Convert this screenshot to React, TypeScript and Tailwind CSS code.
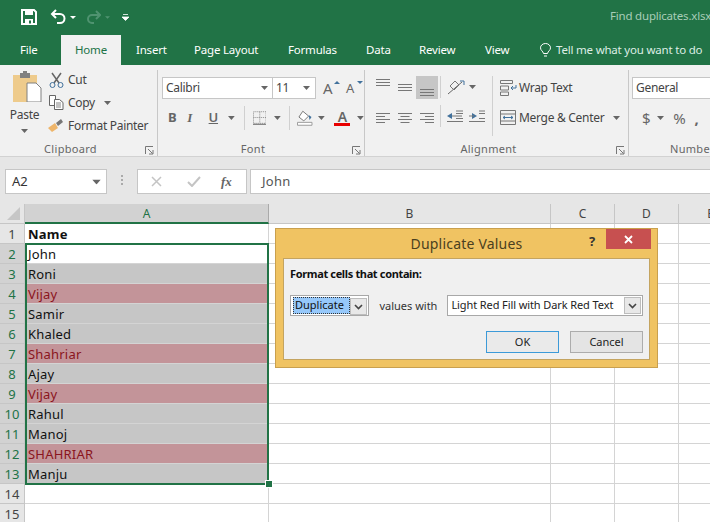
import React from "react";

const Caret = ({ className = "" }: { className?: string }) => (
  <svg width="7" height="4" viewBox="0 0 7 4" className={className}><path d="M0 0h7L3.5 4z" fill="#666" /></svg>
);
const Lines = ({ widths, align = "left", color = "#777" }: { widths: number[]; align?: string; color?: string }) => (
  <svg width="16" height="14" viewBox="0 0 16 14">
    {widths.map((w, i) => {
      const x = align === "left" ? 1 : align === "right" ? 15 - w : 8 - w / 2;
      return <path key={i} d={`M${x} ${2.5 + i * 3}h${w}`} stroke={color} strokeWidth="1" />;
    })}
  </svg>
);
const VAlign = ({ top }: { top: number }) => (
  <svg width="16" height="22" viewBox="0 0 16 22">
    {[0, 3, 6].map((d) => <path key={d} d={`M1 ${top + d + 0.5}h14`} stroke="#777" />)}
  </svg>
);
const Sep = ({ h = "h-[24px]" }: { h?: string }) => <div className={`w-px ${h} bg-[#d0d0d0]`} />;

const Group = ({ w, label, launcher = true, children }: { w: string; label: string; launcher?: boolean; children: React.ReactNode }) => (
  <div className={`${w} shrink-0 h-[86px] border-r border-[#c8c8c8] relative flex flex-col`}>
    <div className="h-[72px] shrink-0">{children}</div>
    <div className="text-[11px] leading-[14px] text-[#666] text-center tracking-[0.3px] pr-[16px]">{label}</div>
    {launcher && (
      <svg width="9" height="9" viewBox="0 0 9 9" className="absolute right-[3px] bottom-[1px]">
        <path d="M.5 8V.5H8M3 3l4.5 4.5M4 8h4V4" stroke="#777" fill="none" />
      </svg>
    )}
  </div>
);

const rows: [string, number][] = [
  ["John", 0], ["Roni", 1], ["Vijay", 2], ["Samir", 1], ["Khaled", 1], ["Shahriar", 2], ["Ajay", 1], ["Vijay", 2], ["Rahul", 1], ["Manoj", 1], ["SHAHRIAR", 2], ["Manju", 1],
];

const Row = ({ n, text, kind, bold }: { n: number; text?: string; kind?: number; bold?: boolean }) => {
  const sel = n >= 2 && n <= 13;
  return (
    <div className="flex h-[20px]">
      <div className={`w-[25px] shrink-0 border-r border-b border-[#c6c6c6] text-[13px] leading-[21px] text-center ${sel ? "bg-[#d2d2d2] text-[#217346]" : "bg-[#e6e6e6] text-[#444]"}`}>{n}</div>
      <div className={`w-[244px] shrink-0 border-r border-b border-[#d4d4d4] pl-[3px] text-[13px] leading-[21px] tracking-[0.2px] ${kind === 1 ? "bg-[#c6c6c6] text-[#111]" : kind === 2 ? "bg-[#c39499] text-[#8a1420]" : "bg-white text-[#111]"} ${bold ? "font-bold" : ""}`}>{text}</div>
      <div className="w-[282px] shrink-0 border-r border-b border-[#d4d4d4] bg-white" />
      <div className="w-[64px] shrink-0 border-r border-b border-[#d4d4d4] bg-white" />
      <div className="w-[64px] shrink-0 border-r border-b border-[#d4d4d4] bg-white" />
      <div className="w-[64px] shrink-0 border-r border-b border-[#d4d4d4] bg-white" />
    </div>
  );
};

const ComboBtn = () => (
  <div className="w-[17px] h-[17px] mt-px mr-px bg-[#e8e8e8] border border-[#bdbdbd] flex items-center justify-center">
    <svg width="9" height="6" viewBox="0 0 9 6"><path d="M1 1l3.5 3.5L8 1" stroke="#444" strokeWidth="1.6" fill="none" /></svg>
  </div>
);

export default function App() {
  return (
    <div className="w-[710px] h-[522px] overflow-hidden relative bg-white text-[12px] font-['Noto_Sans','Open_Sans',sans-serif] text-[#444]">
      {/* Title bar */}
      <div className="h-[35px] bg-[#217346] flex items-center relative">
        <svg width="16" height="16" viewBox="0 0 16 16" className="ml-[21px] mb-[2px]">
          <path d="M1 1h12l2 2v12H1z" fill="none" stroke="#fff" strokeWidth="2" />
          <path d="M4 1h8v5H4zM4 10h8v5H4z" fill="#fff" />
          <path d="M8 11.5h2v3H8z" fill="#217346" />
        </svg>
        <svg width="17" height="15" viewBox="0 0 17 15" className="ml-[13px] mb-[2px]">
          <path d="M6 1L2 5l4 4M2 5h8a4.5 4.5 0 0 1 0 9H7" fill="none" stroke="#fff" strokeWidth="2" />
        </svg>
        <svg width="6" height="3" viewBox="0 0 6 3" className="ml-[3px]"><path d="M0 0h6L3 3z" fill="#fff" /></svg>
        <svg width="15" height="14" viewBox="0 0 15 14" className="ml-[10px] mb-[1px]">
          <path d="M10 1l4 4-4 4M14 5H6a4 4 0 0 0 0 8h2" fill="none" stroke="#4f9370" strokeWidth="2" />
        </svg>
        <svg width="5" height="3" viewBox="0 0 6 3" className="ml-[4px]"><path d="M0 0h6L3 3z" fill="#4f9370" /></svg>
        <svg width="7" height="7" viewBox="0 0 7 7" className="ml-[12px]"><path d="M1 .5h5M0 3h7L3.5 6.5z" stroke="#fff" fill="#fff" strokeWidth=".8" /></svg>
        <div className="absolute left-[610px] top-[8px] text-[11.5px] leading-[16px] tracking-[-0.2px] text-[#a8cdb8] whitespace-nowrap">Find duplicates.xlsx</div>
      </div>
      {/* Tabs */}
      <div className="h-[30px] bg-[#217346] flex text-[11.5px] text-white leading-[30px] whitespace-nowrap tracking-[-0.2px]">
        <div className="ml-[20px] w-[41px] shrink-0">File</div>
        <div className="w-[60px] shrink-0 bg-[#f1f1f1] text-[#217346] text-center">Home</div>
        <div className="ml-[15px] w-[58px] shrink-0">Insert</div>
        <div className="w-[94px] shrink-0">Page Layout</div>
        <div className="w-[78px] shrink-0">Formulas</div>
        <div className="w-[53px] shrink-0">Data</div>
        <div className="w-[66px] shrink-0">Review</div>
        <div className="w-[54px] shrink-0">View</div>
        <div className="flex items-center shrink-0 text-[#ddeee5]">
          <svg width="13" height="15" viewBox="0 0 13 15" className="mr-[4px]">
            <path d="M4.5 10.5C4 8 1.500 7.500 1.500 4.800a5 4.300 0 0 1 10 0c0 2.700-2.500 3.200-3 5.700zM5 13h3" fill="none" stroke="#fff" />
          </svg>
          Tell me what you want to do
        </div>
      </div>
      {/* Ribbon */}
      <div className="h-[92px] bg-[#f1f1f1] border-b border-[#d2d2d2] flex pt-[5px] text-[12px] tracking-[-0.3px] whitespace-nowrap">
        <Group w="w-[158px]" label="Clipboard">
          <div className="flex">
            <div className="w-[49px] flex flex-col items-center pt-[1px]">
              <svg width="30" height="31" viewBox="0 0 30 31" className="ml-[5px]">
                <path d="M1 4h24v27H1z" fill="#eecb8c" />
                <path d="M8 2h10v5H8z" fill="#808080" />
                <path d="M11 0h4v3h-4z" fill="#808080" />
                <path d="M15 12h9l5 5v14H15z" fill="#fff" stroke="#808080" />
              </svg>
              <div className="leading-[16px] mt-[5px]">Paste</div>
              <Caret className="mt-[6px]" />
            </div>
            <div className="flex flex-col -mt-[2px]">
              <div className="h-[23px] flex items-center">
                <svg width="15" height="16" viewBox="0 0 15 16" className="mr-[4px]"><path d="M3 1l7 10M12 1L5 11" stroke="#666" strokeWidth="1.500" /><circle cx="3.500" cy="13" r="2.500" fill="none" stroke="#41719c" /><circle cx="11.500" cy="13" r="2.500" fill="none" stroke="#41719c" /></svg>
                Cut
              </div>
              <div className="h-[23px] flex items-center">
                <svg width="15" height="15" viewBox="0 0 15 15" className="mr-[4px]"><path d="M.5.500h6v10h-6z" fill="#fff" stroke="#666" /><path d="M5.500 4.500h5l3.500 3v7H5.500z" fill="#fff" stroke="#666" /><path d="M7 8h5M7 10h5M7 12h5" stroke="#888" /></svg>
                Copy
                <Caret className="ml-[9px]" />
              </div>
              <div className="h-[23px] flex items-center -ml-px">
                <svg width="16" height="14" viewBox="0 0 16 14" className="mr-[4px]"><path d="M0 9l7-5 3 5-6 4z" fill="#eeb56a" /><path d="M8 4l5-4 2 3-5 4z" fill="#777" /></svg>
                Format Painter
              </div>
            </div>
          </div>
        </Group>
        <Group w="w-[207px]" label="Font">
          <div className="ml-[4px] mt-[7px] flex items-center h-[22px]">
            <div className="w-[111px] h-[22px] bg-white border border-[#c6c6c6] pl-[3px] flex items-center justify-between pr-[4px]">Calibri<Caret /></div>
            <div className="w-[43px] h-[22px] bg-white border border-l-0 border-[#c6c6c6] pl-[3px] flex items-center justify-between pr-[5px]">11<Caret /></div>
            <div className="ml-[7px] relative w-[17px] text-[15px] leading-[20px] text-[#666]">A<span className="absolute right-0 top-[3px] border-x-[3px] border-x-transparent border-b-[3px] border-b-[#41719c]" /></div>
            <div className="ml-[6px] relative w-[17px] text-[13px] leading-[20px] text-[#666]">A<span className="absolute right-0 top-[3px] border-x-[3px] border-x-transparent border-t-[3px] border-t-[#41719c]" /></div>
          </div>
          <div className="ml-[10px] mt-[7px] flex items-center h-[24px] text-[13px] text-[#666]">
            <span className="w-[20px] font-bold">B</span>
            <span className="w-[22px] italic font-['Liberation_Serif',serif] font-bold">I</span>
            <span className="w-[20px] font-semibold underline">U</span>
            <Caret />
            <span className="ml-[9px]"><Sep /></span>
            <svg width="14" height="14" viewBox="0 0 14 14" className="ml-[8px]"><path d="M.5.500h13v12H.5zM7 .5v12M.5 6.500h13" stroke="#888" strokeDasharray="1 1" fill="none" /><path d="M0 13.500h14" stroke="#666" /></svg>
            <Caret className="ml-[8px]" />
            <span className="ml-[8px]"><Sep /></span>
            <svg width="17" height="16" viewBox="0 0 17 16" className="ml-[7px]"><path d="M6 1l6 5-5 5-5-4z" fill="#fff" stroke="#777" /><path d="M12 5l3 2-2 3z" fill="#41719c" /><path d="M.5 12.500h15v3H.5z" fill="#fff" stroke="#999" /></svg>
            <Caret className="ml-[5px]" />
            <div className="ml-[9px] w-[16px] flex flex-col items-center leading-[13px] text-[14px] font-semibold">A<div className="w-[16px] h-[3px] bg-[#e80000]" /></div>
            <Caret className="ml-[7px]" />
          </div>
        </Group>
        <Group w="w-[264px]" label="Alignment">
          <div className="flex">
            <div className="ml-[7px] mt-[6px] w-[66px] grid grid-cols-3 gap-y-[8px] h-[60px] content-start">
              <div className="h-[23px] flex items-center justify-center"><VAlign top={2} /></div>
              <div className="h-[23px] flex items-center justify-center"><VAlign top={7} /></div>
              <div className="h-[23px] bg-[#c6c6c6] flex items-center justify-center"><VAlign top={12} /></div>
              <div className="h-[22px] flex items-center justify-center"><Lines widths={[14, 9, 14, 9]} /></div>
              <div className="h-[22px] flex items-center justify-center"><Lines widths={[14, 9, 14, 9]} align="center" /></div>
              <div className="h-[22px] flex items-center justify-center"><Lines widths={[14, 9, 14, 9]} align="right" /></div>
            </div>
            <div className="ml-[2px] mt-[6px] flex flex-col gap-[7px]">
              <div className="flex items-center h-[22px]">
                <span className="mr-[6px]"><Sep h="h-[22px]" /></span>
                <svg width="18" height="16" viewBox="0 0 18 16"><path d="M1 15L15 3" stroke="#666" /><path d="M3 7l5-5 4 4-5 5z" fill="none" stroke="#777" /><path d="M13 2h4v4" stroke="#41719c" fill="none" /></svg>
                <Caret className="ml-[4px]" />
              </div>
              <div className="flex items-center h-[22px]">
                <span className="mr-[6px]"><Sep h="h-[22px]" /></span>
                <svg width="16" height="12" viewBox="0 0 16 12"><path d="M0 6l5-3v6z" fill="#41719c" /><path d="M5 6h10M9 1h7M9 3.500h7M0 11.500h16M9 8.500h7" stroke="#777" /></svg>
                <svg width="16" height="12" viewBox="0 0 16 12" className="ml-[6px]"><path d="M8 6L3 3v6z" fill="#41719c" /><path d="M0 6h5M10 1h6M10 3.500h6M0 11.500h16M10 8.500h6" stroke="#777" /></svg>
              </div>
            </div>
            <div className="ml-[7px] mt-[6px] w-px h-[60px] bg-[#d0d0d0]" />
            <div className="ml-[7px] mt-[7px] flex flex-col gap-[9px]">
              <div className="flex items-center h-[21px]">
                <svg width="18" height="16" viewBox="0 0 18 16" className="mr-[1px]"><path d="M.5.500h12v3H.5zM.5 6h8v4H.5zM.5 12h8v3.500H.5z" fill="none" stroke="#777" /><path d="M16 5v3h-5l2-2m-2 2l2 2" stroke="#41719c" fill="none" /></svg>
                Wrap Text
              </div>
              <div className="flex items-center h-[21px]">
                <svg width="16" height="15" viewBox="0 0 16 15" className="mr-[3px]"><path d="M.5.500h15v14H.5zM.5 4h15M.5 11h15" fill="none" stroke="#777" /><path d="M3 7.500h10M5 6L3 7.500 5 9M11 6l2 1.500L11 9" stroke="#41719c" fill="none" /></svg>
                Merge &amp; Center
                <Caret className="ml-[9px]" />
              </div>
            </div>
          </div>
        </Group>
        <div className="flex-1 flex flex-col relative overflow-hidden">
          <div className="h-[72px] shrink-0">
            <div className="ml-[3px] mt-[7px] w-[90px] h-[22px] bg-white border border-[#c6c6c6] pl-[3px] leading-[20px]">General</div>
            <div className="ml-[13px] mt-[9px] flex items-center h-[20px] text-[15px] text-[#666]">
              $<Caret className="ml-[7px]" /><span className="ml-[9px]">%</span><span className="ml-[9px] font-bold">,</span>
            </div>
          </div>
          <div className="text-[11px] leading-[14px] text-[#666] pl-[41px] tracking-[0.3px]">Number</div>
        </div>
      </div>
      {/* Formula bar */}
      <div className="h-[47px] bg-[#e6e6e6] flex pt-[12px] text-[#555]">
        <div className="ml-[5px] w-[102px] h-[25px] bg-white border border-[#c6c6c6] flex items-center justify-between pl-[6px] pr-[6px] text-[13px] text-[#333]">A2<Caret className="scale-125" /></div>
        <div className="w-[30px] flex flex-col items-center gap-[2px] pt-[6px]">
          <div className="w-[2px] h-[2px] bg-[#aaa]" /><div className="w-[2px] h-[2px] bg-[#aaa]" /><div className="w-[2px] h-[2px] bg-[#aaa]" />
        </div>
        <div className="w-[110px] h-[25px] bg-white border border-[#c6c6c6] flex items-center">
          <svg width="11" height="11" viewBox="0 0 11 11" className="ml-[13px]"><path d="M1 1l9 9M10 1l-9 9" stroke="#c4c4c4" strokeWidth="1.500" /></svg>
          <svg width="14" height="11" viewBox="0 0 14 11" className="ml-[25px]"><path d="M1 6l4 4 8-9" stroke="#c4c4c4" strokeWidth="2" fill="none" /></svg>
          <span className="ml-[20px] font-['Liberation_Serif',serif] italic font-bold text-[13px] text-[#666]">fx</span>
        </div>
        <div className="ml-[3px] flex-1 h-[25px] bg-white border border-r-0 border-[#c6c6c6] pl-[11px] leading-[23px] text-[13px] tracking-[0.3px]">John</div>
      </div>
      {/* Sheet */}
      <div className="relative">
        <div className="flex h-[20px] text-[12px] leading-[19px] text-center text-[#444]">
          <div className="w-[25px] shrink-0 bg-[#e6e6e6] border-r border-b border-[#c6c6c6] relative overflow-hidden">
            <svg width="14" height="13" viewBox="0 0 14 13" className="absolute right-[3px] bottom-[3px]"><path d="M13 0v13H0z" fill="#c6c6c6" /></svg>
          </div>
          <div className="w-[244px] shrink-0 bg-[#d2d2d2] border-r border-[#aaa] border-b-2 border-b-[#217346] text-[#217346]">A</div>
          <div className="w-[282px] shrink-0 bg-[#e6e6e6] border-r border-b border-[#c6c6c6]">B</div>
          <div className="w-[64px] shrink-0 bg-[#e6e6e6] border-r border-b border-[#c6c6c6]">C</div>
          <div className="w-[64px] shrink-0 bg-[#e6e6e6] border-r border-b border-[#c6c6c6]">D</div>
          <div className="w-[64px] shrink-0 bg-[#e6e6e6] border-r border-b border-[#c6c6c6]">E</div>
        </div>
        <Row n={1} text="Name" bold />
        {rows.map(([t, k], i) => <Row key={i} n={i + 2} text={t} kind={k} />)}
        <Row n={14} />
        <Row n={15} />
        {/* Selection */}
        <div className="absolute left-[25px] top-[39px] w-[244px] h-[242px] border-2 border-[#217346] pointer-events-none" />
        <div className="absolute left-[266px] top-[277px] w-[6px] h-[6px] bg-[#217346] outline outline-1 outline-white" />
      </div>
      {/* Dialog */}
      <div className="absolute left-[275px] top-[228px] w-[383px] h-[140px] bg-[#f0c362] border border-[#c9a04e] flex flex-col text-[11px] text-[#222]">
        <div className="h-[29px] relative shrink-0">
          <div className="text-center text-[14px] leading-[30px] text-[#4a4020] tracking-[0.2px]">Duplicate Values</div>
          <div className="absolute left-[313px] top-[4px] text-[13px] font-bold leading-[16px] text-[#333]">?</div>
          <div className="absolute right-[6px] top-0 w-[45px] h-[20px] bg-[#c75050] flex items-center justify-center">
            <svg width="9" height="9" viewBox="0 0 9 9"><path d="M1 1l7 7M8 1L1 8" stroke="#fff" strokeWidth="1.800" /></svg>
          </div>
        </div>
        <div className="mx-[7px] h-[102px] bg-[#f0f0f0] border border-[#c4a460] px-[6px]">
          <div className="mt-[7px] font-bold leading-[16px] text-[#111] tracking-[-0.35px] whitespace-nowrap">Format cells that contain:</div>
          <div className="mt-[13px] flex items-start h-[21px]">
            <div className="w-[80px] h-[21px] bg-white border border-[#a8a8a8] flex justify-between pl-[2px] pt-px">
              <div className="w-[57px] h-[17px] bg-[#96c8fa] border border-dotted border-[#333] leading-[14px] pl-[1px] text-[#111] whitespace-nowrap">Duplicate</div>
              <ComboBtn />
            </div>
            <div className="ml-[10px] w-[58px] leading-[21px] text-[#333] whitespace-nowrap">values with</div>
            <div className="ml-[10px] w-[197px] h-[21px] bg-white border border-[#a8a8a8] flex justify-between pl-[3px]">
              <div className="leading-[17px] text-[#222] tracking-[-0.1px] whitespace-nowrap">Light Red Fill with Dark Red Text</div>
              <ComboBtn />
            </div>
          </div>
          <div className="mt-[15px] flex">
            <div className="ml-[196px] w-[73px] h-[22px] bg-[#eaeaea] border border-[#3c9ad8] text-center leading-[20px]">OK</div>
            <div className="ml-[11px] w-[73px] h-[22px] bg-[#e4e4e4] border border-[#acacac] text-center leading-[20px]">Cancel</div>
          </div>
        </div>
      </div>
    </div>
  );
}
